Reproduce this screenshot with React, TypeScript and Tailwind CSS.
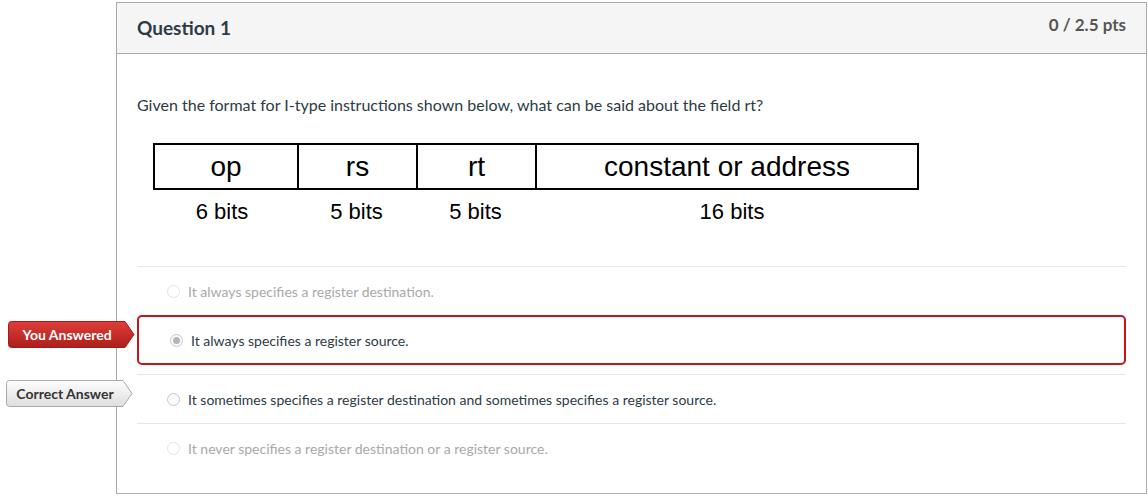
import React from 'react';

const cols = [
  { label: 'op', bits: '6 bits', w: 'w-[144px]' },
  { label: 'rs', bits: '5 bits', w: 'w-[119px]' },
  { label: 'rt', bits: '5 bits', w: 'w-[119px]' },
  { label: 'constant or address', bits: '16 bits', w: 'w-[382px]' },
];

const Tag: React.FC<{ text: string; red?: boolean }> = ({ text, red }) => (
  <div className="absolute left-[-131px] top-[4px] w-[127px] h-[27px]">
    <svg width="127" height="27" viewBox="0 0 127 27" className="absolute inset-0">
      <defs>
        <linearGradient id={red ? 'gr' : 'gg'} x1="0" y1="0" x2="0" y2="1">
          <stop offset="0" stopColor={red ? '#de3e39' : '#fdfdfd'} />
          <stop offset="1" stopColor={red ? '#ad1f1b' : '#dedede'} />
        </linearGradient>
      </defs>
      <path
        d="M3.5,0.5 H117 L126,13.5 L117,26.5 H3.5 Q0.5,26.5 0.5,23.5 V3.5 Q0.5,0.5 3.5,0.5 Z"
        fill={`url(#${red ? 'gr' : 'gg'})`}
        stroke={red ? '#a31c18' : '#a9a9a9'}
        strokeWidth="1"
      />
    </svg>
    <span
      className={`relative flex h-full w-[118px] items-center justify-center text-[14px] font-bold ${
        red ? 'text-white' : 'text-[#333]'
      }`}
    >
      {text}
    </span>
  </div>
);

const Radio: React.FC<{ checked?: boolean; faded?: boolean }> = ({ checked, faded }) => (
  <span
    className={`w-[13px] h-[13px] rounded-full border shrink-0 flex items-center justify-center ${
      faded ? 'border-[#e3e3e3] bg-white' : 'border-[#c8c8c8] bg-[#fafafa]'
    }`}
  >
    {checked && <span className="w-[7px] h-[7px] rounded-full bg-[#b5b5b5]" />}
  </span>
);

export default function App() {
  return (
    <div className="bg-white w-[1148px] h-[496px] pl-[116px] pt-[2px] font-['Lato','Noto_Sans',sans-serif]">
      <div className="w-[1031px] h-[492px] border border-[#acacac] bg-white">
        {/* header */}
        <div className="h-[51px] bg-[#f5f5f5] border-b border-[#acacac] flex justify-between items-start px-[20px]">
          <h2 className="text-[19px] font-bold text-[#2d3b45] mt-[14px] leading-[22px]">Question 1</h2>
          <span className="text-[17px] font-bold text-[#555] mt-[12px] leading-[20px]">0 / 2.5 pts</span>
        </div>

        <div className="px-[20px] pt-[41px]">
          <p className="text-[16px] leading-[20px] text-[#2d3b45]">
            Given the format for I-type instructions shown below, what can be said about the field rt?
          </p>

          {/* instruction format */}
          <div className="ml-[16px] mt-[28px] font-['Liberation_Sans',Arial,sans-serif] text-black">
            <div className="flex w-[766px] border-2 border-black h-[47px]">
              {cols.map((c, i) => (
                <div
                  key={c.label}
                  className={`${c.w} flex items-center justify-center text-[28px] leading-none ${
                    i < cols.length - 1 ? 'border-r-2 border-black' : 'flex-1'
                  }`}
                >
                  {c.label}
                </div>
              ))}
            </div>
            <div className="flex w-[766px] mt-[9px]">
              {cols.map((c, i) => (
                <div
                  key={c.bits}
                  className={`${i < cols.length - 1 ? c.w : 'flex-1'} text-center text-[22px] leading-[26px] ${
                    i === 0 ? 'pr-[6px]' : i === 3 ? 'pl-[10px]' : ''
                  }`}
                >
                  {c.bits}
                </div>
              ))}
            </div>
          </div>

          {/* answers */}
          <div className="mt-[41px] text-[14px]">
            <div className="h-[49px] border-t border-[#e6e6e6] flex items-center gap-[8px] pl-[30px] text-[#a9a9a9]">
              <Radio faded />
              <span>It always specifies a register destination.</span>
            </div>

            <div className="relative h-[50px] border-2 border-[#c4161c] rounded-[5px] flex items-center gap-[8px] pl-[31px] text-[#2d3b45]">
              <Tag text="You Answered" red />
              <Radio checked />
              <span>It always specifies a register source.</span>
            </div>

            <div className="relative mt-[9px] h-[49px] border-t border-[#e6e6e6] flex items-center gap-[8px] pl-[30px] text-[#2d3b45]">
              <div className="absolute left-[0px] top-[1px]">
                <Tag text="Correct Answer" />
              </div>
              <Radio />
              <span>It sometimes specifies a register destination and sometimes specifies a register source.</span>
            </div>

            <div className="h-[49px] border-t border-[#e6e6e6] flex items-center gap-[8px] pl-[30px] text-[#a9a9a9]">
              <Radio faded />
              <span>It never specifies a register destination or a register source.</span>
            </div>
          </div>
        </div>
      </div>
    </div>
  );
}
